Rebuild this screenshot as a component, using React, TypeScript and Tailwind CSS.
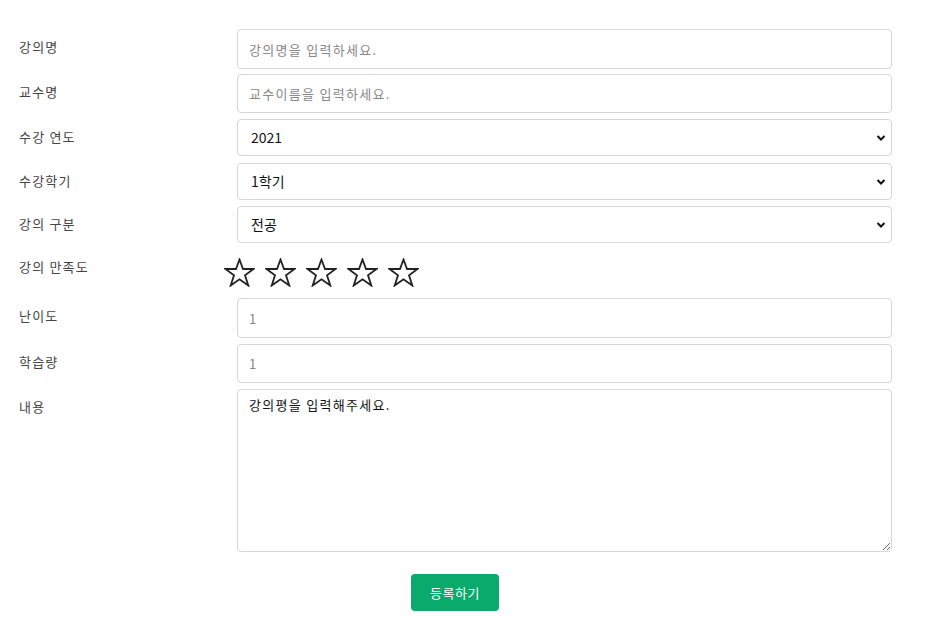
import React from "react";

const font = { fontFamily: '"Noto Sans CJK KR", "Noto Sans", sans-serif' };

function Label({ children }: { children: React.ReactNode }) {
  return (
    <div className="w-[218px] shrink-0 pt-[9px] text-[13px] leading-[18px] tracking-[1.2px] text-[#444]">
      {children}
    </div>
  );
}

function Chevron() {
  return (
    <svg
      className="pointer-events-none absolute right-[6px] top-1/2 -translate-y-1/2"
      width="10"
      height="7"
      viewBox="0 0 10 7"
    >
      <path d="M1.5 1.5 L5 5 L8.5 1.5" fill="none" stroke="#111" strokeWidth="2" />
    </svg>
  );
}

function Select({ value, options }: { value: string; options: string[] }) {
  return (
    <div className="relative flex-1">
      <select
        defaultValue={value}
        className="h-[37px] w-full appearance-none rounded-[4px] border border-[#d6d6d6] bg-white pl-[13px] text-[14px] text-[#111] outline-none"
      >
        {options.map((o) => (
          <option key={o}>{o}</option>
        ))}
      </select>
      <Chevron />
    </div>
  );
}

function Star() {
  return (
    <svg width="31" height="29" viewBox="0 0 31 29">
      <polygon
        points="15.5,1.5 19,11 29.5,11 21,17.3 24.3,27.5 15.5,21.3 6.7,27.5 10,17.3 1.5,11 12,11"
        fill="white"
        stroke="#222"
        strokeWidth="1.8"
        strokeLinejoin="miter"
      />
    </svg>
  );
}

const inputCls =
  "flex-1 rounded-[4px] border border-[#d6d6d6] px-[11px] text-[13px] tracking-[1.3px] text-[#111] outline-none placeholder:text-[#888]";

export default function App() {
  return (
    <div className="min-h-[641px] w-[940px] bg-white pt-[29px] pl-[19px] pr-[48px]" style={font}>
      <div className="mb-[5px] flex">
        <Label>강의명</Label>
        <input placeholder="강의명을 입력하세요." className={`h-10 ${inputCls}`} />
      </div>
      <div className="mb-[6px] flex">
        <Label>교수명</Label>
        <input placeholder="교수이름을 입력하세요." className={`h-[39px] ${inputCls}`} />
      </div>
      <div className="mb-[7px] flex">
        <Label>수강 연도</Label>
        <Select value="2021" options={["2021", "2020", "2019", "2018"]} />
      </div>
      <div className="mb-[6px] flex">
        <Label>수강학기</Label>
        <Select value="1학기" options={["1학기", "2학기", "여름학기", "겨울학기"]} />
      </div>
      <div className="flex">
        <Label>강의 구분</Label>
        <Select value="전공" options={["전공", "교양", "기타"]} />
      </div>
      <div className="mt-[6px] mb-[5px] flex h-[44px]">
        <Label>강의 만족도</Label>
        <div className="ml-[-13px] flex gap-[10px] pt-[9px]">
          <Star />
          <Star />
          <Star />
          <Star />
          <Star />
        </div>
      </div>
      <div className="mb-[6px] flex">
        <Label>난이도</Label>
        <input placeholder="1" className={`h-10 ${inputCls}`} />
      </div>
      <div className="mb-[6px] flex">
        <Label>학습량</Label>
        <input placeholder="1" className={`h-[39px] ${inputCls}`} />
      </div>
      <div className="flex">
        <Label>내용</Label>
        <textarea
          defaultValue="강의평을 입력해주세요."
          className="h-[163px] flex-1 rounded-[4px] border border-[#d6d6d6] px-[11px] pt-[6px] text-[13px] leading-[18px] tracking-[1.3px] text-[#111] outline-none"
        />
      </div>
      <div className="mt-[22px] flex">
        <div className="w-[392px] shrink-0" />
        <button className="h-[37px] w-[88px] rounded-[4px] bg-[#0aa96c] text-[13px] tracking-[0.5px] text-white">
          등록하기
        </button>
      </div>
    </div>
  );
}
